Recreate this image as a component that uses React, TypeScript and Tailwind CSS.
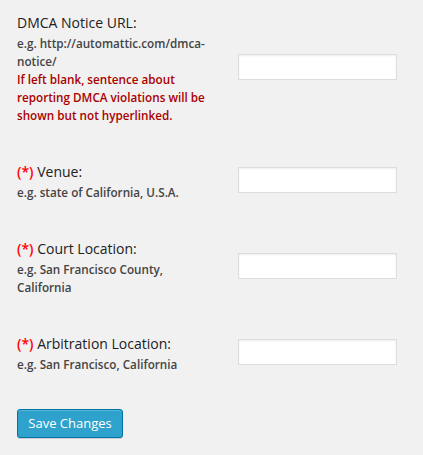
import React from 'react';

interface Field {
  id: string;
  label: string;
  required?: boolean;
  hint: string;
  note?: string;
}

const fields: Field[] = [
  {
    id: 'dmca_url',
    label: 'DMCA Notice URL:',
    hint: 'e.g. http://automattic.com/dmca-notice/',
    note: 'If left blank, sentence about reporting DMCA violations will be shown but not hyperlinked.',
  },
  { id: 'venue', label: 'Venue:', required: true, hint: 'e.g. state of California, U.S.A.' },
  { id: 'court', label: 'Court Location:', required: true, hint: 'e.g. San Francisco County, California' },
  { id: 'arbitration', label: 'Arbitration Location:', required: true, hint: 'e.g. San Francisco, California' },
];

const App: React.FC = () => {
  return (
    <div
      className="min-h-screen bg-[#f1f1f1] pl-[17px] pt-[14px]"
      style={{ fontFamily: '"Open Sans", "Noto Sans", sans-serif' }}
    >
      <div className="flex flex-col gap-[39px]">
        {fields.map((field) => (
          <div key={field.id} className="flex items-center">
            <div className="w-[193px] shrink-0">
              <div className="text-[14px] leading-[18px] font-medium text-[#222]">
                {field.required && <span className="font-semibold text-[#ff0000]">(*) </span>}
                {field.label}
              </div>
              <p className="mt-[2px] text-[11.7px] leading-[18px] font-semibold text-[#444]">{field.hint}</p>
              {field.note && (
                <p className="text-[11.7px] leading-[18px] font-semibold text-[#a00]">{field.note}</p>
              )}
            </div>
            <input
              type="text"
              className="ml-[28px] mb-1 h-[26px] w-[159px] border border-[#ddd] bg-white shadow-[inset_0_1px_2px_rgba(0,0,0,0.07)] outline-none"
            />
          </div>
        ))}
      </div>

      <button
        type="button"
        className="mt-[36px] h-[29px] w-[106px] rounded-[3px] border border-[#0074a2] bg-[#2ea2cc] text-[13px] text-white shadow-[inset_0_1px_0_rgba(120,200,230,0.5),0_1px_0_rgba(0,0,0,0.15)]"
      >
        Save Changes
      </button>
    </div>
  );
};

export default App;
